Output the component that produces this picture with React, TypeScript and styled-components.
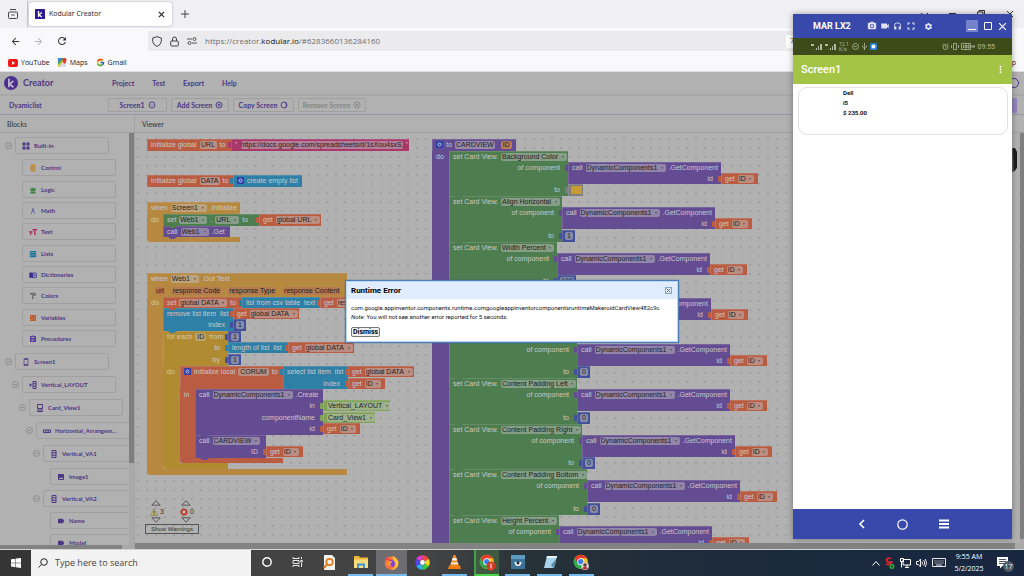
import React, { ReactNode } from 'react';
import styled, { createGlobalStyle, css } from 'styled-components';
import {
  MdArchitecture, MdAssignment, MdCasino, MdFormatPaint, MdFullscreen, MdHeadset,
  MdImage, MdLabel, MdMenuBook, MdMoreVert, MdPhotoCamera, MdSettings, MdStayCurrentPortrait,
  MdVideocam, MdArrowBack, MdArrowForward, MdRefresh,
} from 'react-icons/md';
import { FcGoogle } from 'react-icons/fc';

const ui = '"Open Sans", "Noto Sans", sans-serif';
const brand = 'Lato, "Open Sans", sans-serif';
const blockFont = '"Liberation Sans", Arial, sans-serif';
const phoneFont = 'Roboto, "Noto Sans", sans-serif';

const tone = {
  orange: '#b95c42',
  magenta: '#a93769',
  blue: '#2f80a6',
  gold: '#b7883f',
  yellow: '#b18b31',
  green: '#4e7d50',
  lime: '#7fa458',
  purple: '#644c93',
  indigo: '#45509a',
  grey: '#7d7d7d',
};

const Global = createGlobalStyle`
  * { box-sizing: border-box; }
  body { margin: 0; overflow: hidden; background: #b1b1b1; }
  button, input, select { font: inherit; color: inherit; margin: 0; padding: 0; border: 0; background: none; border-radius: 0; }
  a { color: inherit; text-decoration: none; }
  ul { list-style: none; margin: 0; padding: 0; }
  svg { display: block; flex: none; }
`;

const Desktop = styled.div`
  position: relative;
  display: flex;
  flex-direction: column;
  height: 100vh;
  overflow: hidden;
  font: 7px/10px ${ui};
`;

/* ---------- browser chrome ---------- */

const TabStrip = styled.header`
  flex: none;
  display: flex;
  align-items: center;
  height: 28px;
  padding-right: 10px;
  background: #f0f0f4;
  color: #222;
`;
const TabListButton = styled.button`
  display: grid;
  place-items: center;
  width: 28px;
  height: 28px;
  padding-right: 2px;
  border-right: 1px solid #c8c8cf;
`;
const Tab = styled.div`
  display: flex;
  align-items: center;
  gap: 4px;
  width: 143px;
  height: 24px;
  margin-left: 1px;
  padding: 0 7px 0 6px;
  border-radius: 3px;
  background: #fff;
  box-shadow: 0 0 2px #8a8a93;
  span { flex: 1; }
`;
const PlainButton = styled.button`
  display: grid;
  place-items: center;
`;
const NewTab = styled(PlainButton)`
  margin-left: 9px;
`;
const WindowControls = styled.div`
  display: flex;
  align-items: center;
  gap: 21px;
  margin-left: auto;
`;
const NavBar = styled.nav`
  flex: none;
  display: flex;
  align-items: center;
  gap: 12px;
  height: 26px;
  padding-left: 10px;
  background: #f9f9fb;
  color: #333;
`;
const AddressBar = styled.div`
  flex: 1;
  display: flex;
  align-items: center;
  gap: 8px;
  height: 20px;
  margin-left: 68px;
  padding: 0 4px;
  background: #ebebee;
  margin-right: 80px;
`;
const Address = styled.a`
  font-size: 8px;
  color: #6d6d73;
  b { font-weight: 400; color: #111; }
`;
const ZoomLevel = styled.button`
  height: 13px;
  margin-left: auto;
  margin-right: 132px;
  padding: 0 4px;
  background: #fff;
  border-radius: 2px;
  color: #222;
`;
const Bookmarks = styled.nav`
  flex: none;
  display: flex;
  align-items: center;
  gap: 8px;
  height: 18px;
  padding: 0 8px;
  background: #f9f9fb;
  border-bottom: 1px solid #dcdce0;
  color: #16161c;
  a { display: flex; align-items: center; gap: 3px; }
  a:last-child { margin-left: auto; }
`;

/* ---------- Kodular ---------- */

const Kodular = styled.main`
  flex: 1;
  min-height: 0;
  display: flex;
  flex-direction: column;
  background: #b1b1b1;
  color: #4c3783;
  font-family: ${brand};
  font-weight: 700;
`;
const TopBar = styled.div`
  flex: none;
  display: flex;
  align-items: center;
  height: 24px;
  padding: 0 5px 0 4px;
  border-bottom: 2px solid #a8a8a8;
`;
const Brand = styled.a`
  display: flex;
  align-items: center;
  gap: 5px;
  width: 108px;
  font-size: 9px;
`;
const Menu = styled.div`
  display: flex;
  gap: 18px;
`;
const Avatar = styled.div`
  margin-left: auto;
  width: 10px;
  height: 10px;
  border: 1px solid #4c3783;
  border-radius: 50%;
`;
const ScreenBar = styled.div`
  flex: none;
  display: flex;
  align-items: center;
  gap: 4px;
  height: 19px;
  padding: 0 7px 0 9px;
  border-bottom: 1px solid #9595ad;
`;
const ProjectName = styled.span`
  width: 95px;
`;
const ScreenButton = styled.button<{ $w: number }>`
  display: flex;
  align-items: center;
  justify-content: center;
  gap: 3px;
  width: ${p => p.$w}px;
  height: 14px;
  border: 1px solid #9f9f9f;
  border-radius: 1px;
  &:disabled { color: #858585; }
`;
const DesignerButton = styled.button`
  margin-left: auto;
  width: 30px;
  height: 15px;
  background: #9384bb;
`;
const Columns = styled.div`
  flex: 1;
  min-height: 0;
  display: flex;
`;
const Panel = styled.section`
  flex: none;
  display: flex;
  flex-direction: column;
  width: 135px;
  border-right: 1px solid #a3a3a3;
`;
const ViewerPanel = styled.section`
  flex: 1;
  min-width: 0;
  display: flex;
  flex-direction: column;
`;
const PanelTitle = styled.h2`
  flex: none;
  margin: 0;
  height: 18px;
  padding-left: 7px;
  border-bottom: 1px solid #a0a0a0;
  font: 400 7px/18px ${brand};
  color: #333;
`;
const TreeArea = styled.div`
  flex: 1;
  min-height: 0;
  display: flex;
`;
const Tree = styled.ul`
  flex: 1;
  min-width: 0;
  overflow: hidden;
  padding-top: 4px;
  font-size: 6px;
`;
const TreeGroup = styled.ul`
  padding: 1px 0;
  li:nth-child(3n + 2) { margin-top: 5px; }
`;
const TreeItem = styled.li<{ $depth: number; $gap?: number }>`
  display: flex;
  align-items: center;
  gap: 3px;
  height: 17px;
  margin-top: ${p => p.$gap ?? 4}px;
  padding-left: ${p => 5 + p.$depth * 7}px;
`;
const Toggle = styled.button<{ $hidden?: boolean }>`
  flex: none;
  display: grid;
  place-items: center;
  width: 7px;
  height: 7px;
  border: 1px solid #8c8c8c;
  border-radius: 50%;
  visibility: ${p => (p.$hidden ? 'hidden' : 'visible')};
  &::after { content: ''; width: 3px; height: 1px; background: #8c8c8c; }
`;
const TreeButton = styled.button`
  flex: none;
  display: flex;
  align-items: center;
  gap: 4px;
  width: 94px;
  height: 17px;
  padding-left: 6px;
  border: 1px solid #a0a0a0;
  border-radius: 2px;
  white-space: nowrap;
`;
const VerticalTrack = styled.div<{ $w: number; $thumb: number }>`
  flex: none;
  width: ${p => p.$w}px;
  background: #a9a9a9;
  &::before { content: ''; display: block; height: ${p => p.$thumb}%; background: #7f7f7f; }
`;
const HorizontalTrack = styled.div<{ $h: number; $thumb: number }>`
  flex: none;
  height: ${p => p.$h}px;
  background: #a9a9a9;
  &::before { content: ''; display: block; width: ${p => p.$thumb}%; height: 100%; background: #828282; }
`;
const CanvasArea = styled.div`
  flex: 1;
  min-height: 0;
  display: flex;
`;
const Canvas = styled.div`
  position: relative;
  isolation: isolate;
  flex: 1;
  min-width: 0;
  overflow: hidden;
  background-image: radial-gradient(circle at 3px 6px, #a0a0a0 1px, transparent 1px);
  background-size: 9px 9px;
  font: 400 7px/11px ${blockFont};
  color: #c9c9c9;
`;

/* ---------- blocks ---------- */

const Stack = styled.div<{ $x: number; $y: number }>`
  position: absolute;
  left: ${p => p.$x}px;
  top: ${p => p.$y}px;
`;
const Shape = styled.div<{ $plug?: string; $notch?: string }>`
  position: relative;
  width: max-content;
  ${p => p.$plug && css`
    &::before {
      content: '';
      position: absolute;
      left: -3px;
      top: 3px;
      width: 3px;
      height: 6px;
      background: ${p.$plug};
      border-radius: 1px 0 0 1px;
    }
  `}
  ${p => p.$notch && css`
    &::after {
      content: '';
      position: absolute;
      z-index: 1;
      left: 5px;
      bottom: -2px;
      width: 9px;
      height: 2px;
      background: ${p.$notch};
      clip-path: polygon(0 0, 100% 0, 70% 100%, 30% 100%);
    }
  `}
`;
const ShapeRow = styled.div`
  display: flex;
  align-items: flex-start;
`;
const Face = styled.div<{ $tone: string; $w: number; $h: number; $top?: boolean }>`
  flex: none;
  width: ${p => p.$w}px;
  height: ${p => p.$h}px;
  background: ${p => p.$tone};
  box-shadow: ${p => (p.$top ? 'inset 1px 1px 0 rgba(200, 200, 200, 0.2)' : 'inset 1px 0 0 rgba(200, 200, 200, 0.2)')};
`;
const Line = styled.div<{ $end?: boolean }>`
  display: flex;
  align-items: center;
  justify-content: ${p => (p.$end ? 'flex-end' : 'flex-start')};
  gap: 3px;
  height: 11px;
  padding: 0 ${p => (p.$end ? 8 : 4)}px 0 4px;
  white-space: nowrap;
`;
const Arm = styled.div<{ $tone: string; $w: number }>`
  flex: none;
  width: ${p => p.$w}px;
  padding-left: 4px;
  background: ${p => p.$tone};
`;
const ArmRow = styled.div`
  display: flex;
  align-items: stretch;
`;
const Foot = styled.div<{ $tone: string; $w: number; $h?: number }>`
  width: ${p => p.$w}px;
  height: ${p => p.$h ?? 6}px;
  background: ${p => p.$tone};
  border-radius: 0 0 0 3px;
`;
const Chip = styled.span`
  flex: none;
  display: inline-flex;
  align-items: center;
  height: 8px;
  padding: 0 2px;
  border-radius: 2px;
  background: rgba(190, 190, 190, 0.5);
  color: #1f1f1f;
  line-height: 8px;
`;
const PickWrap = styled(Chip)`
  gap: 3px;
  padding: 0 3px 0 1px;
  &::after {
    content: '';
    border: 1px solid transparent;
    border-top: 2px solid #555;
    border-bottom: 0;
  }
`;
const PickSelect = styled.select`
  appearance: none;
  height: 8px;
  line-height: 8px;
  outline: 0;
`;
const ChipInput = styled.input<{ $w: number }>`
  flex: none;
  width: ${p => p.$w}px;
  height: 8px;
  border-radius: 2px;
  background: rgba(190, 190, 190, 0.55);
  color: #1f1f1f;
  line-height: 8px;
  text-align: center;
`;
const Params = styled.div`
  display: flex;
  gap: 7px;
  padding-left: 4px;
`;
const Param = styled(Chip)`
  padding: 0 1px;
  background: #b57a52;
`;
const ParamChip = styled(Chip)`
  margin-left: 3px;
  background: #bd7a58;
`;
const Swatch = styled.button`
  width: 11px;
  height: 8px;
  background: #c79b35;
`;
const GearBox = styled.button`
  display: grid;
  place-items: center;
  width: 7px;
  height: 7px;
  border-radius: 1px;
  background: #3140a8;
`;

const Pick = ({ label, value }: { label: string; value: string }) => (
  <PickWrap>
    <PickSelect aria-label={label} defaultValue={value}>
      <option>{value}</option>
    </PickSelect>
  </PickWrap>
);
const Gear = () => (
  <GearBox aria-label="Block options">
    <svg width="5" height="5" viewBox="0 0 10 10" fill="none" stroke="#c4c8e6" strokeWidth="2">
      <circle cx="5" cy="5" r="3" />
    </svg>
  </GearBox>
);

type RowSpec = { text: ReactNode; h?: number; end?: boolean; socket?: ReactNode };
type BlockProps = { tone: string; w: number; rows: RowSpec[]; value?: boolean; notch?: boolean };

const Block = ({ tone: color, w, rows, value, notch }: BlockProps) => (
  <Shape $plug={value ? color : undefined} $notch={notch ? color : undefined}>
    {rows.map((r, i) => (
      <ShapeRow key={i}>
        <Face $tone={color} $w={w} $h={r.h ?? 12} $top={i === 0}>
          <Line $end={r.end}>{r.text}</Line>
        </Face>
        {r.socket}
      </ShapeRow>
    ))}
  </Shape>
);

const Get = ({ name, w, h = 12 }: { name: string; w: number; h?: number }) => (
  <Block value tone={tone.orange} w={w} rows={[{ h, text: <>get <Pick label="Variable" value={name} /></> }]} />
);
const ComponentRef = ({ name, w }: { name: string; w: number }) => (
  <Block value tone={tone.lime} w={w} rows={[{ h: 11, text: <Pick label="Component" value={name} /> }]} />
);
const Tight = styled.div`
  ${Line} { padding-left: 3px; padding-right: 0; }
`;
const NumberBlock = ({ value, w = 13, h = 12 }: { value: string; w?: number; h?: number }) => (
  <Tight>
    <Block value tone={tone.indigo} w={w} rows={[{ h, text: <ChipInput aria-label="Number" $w={w - 5} defaultValue={value} /> }]} />
  </Tight>
);

type Property = { name: string; w: number; value: ReactNode };
const properties: Property[] = [
  { name: 'Background Color', w: 119, value: <Tight><Block value tone={tone.grey} w={15} rows={[{ text: <Swatch aria-label="Colour" /> }]} /></Tight> },
  { name: 'Align Horizontal', w: 113, value: <NumberBlock value="1" /> },
  { name: 'Width Percent', w: 108, value: <NumberBlock value="100" w={19} /> },
  { name: 'Corner Radius', w: 109, value: <NumberBlock value="0" /> },
  { name: 'Content Padding Top', w: 128, value: <NumberBlock value="0" /> },
  { name: 'Content Padding Left', w: 128, value: <NumberBlock value="0" /> },
  { name: 'Content Padding Right', w: 133, value: <NumberBlock value="0" /> },
  { name: 'Content Padding Bottom', w: 138, value: <NumberBlock value="0" /> },
  { name: 'Height Percent', w: 110, value: <NumberBlock value="100" w={19} /> },
];

const PropertyBlock = ({ p, tall }: { p: Property; tall: boolean }) => (
  <Block
    notch
    tone={tone.green}
    w={p.w}
    rows={[
      { h: 11, text: <>set Card View. <Pick label="Property" value={p.name} /></> },
      {
        h: tall ? 23 : 22,
        end: true,
        text: 'of component',
        socket: (
          <Block
            value
            tone={tone.purple}
            w={153}
            rows={[
              { h: 11, text: <>call <Pick label="Component" value="DynamicComponents1" /> .GetComponent</> },
              { h: 11, end: true, text: 'id', socket: <Get name="ID" w={37} h={11} /> },
            ]}
          />
        ),
      },
      { h: 12, end: true, text: 'to', socket: p.value },
    ]}
  />
);

const Warnings = styled.div`
  position: absolute;
  left: 10px;
  bottom: 9px;
  width: 54px;
  color: #333;
`;
const Counters = styled.div`
  display: flex;
  gap: 16px;
  padding-left: 5px;
`;
const Counter = styled.div`
  display: flex;
  align-items: center;
  width: 14px;
  gap: 2px;
`;
const ArrowButton = styled.button`
  display: grid;
  place-items: center;
  width: 14px;
  height: 6px;
  padding-right: 2px;
`;
const WarningButton = styled.button`
  width: 54px;
  height: 10px;
  border: 1px solid #555;
  line-height: 8px;
  font-size: 6px;
`;
const Backpack = styled.div`
  position: absolute;
  right: 3px;
  top: 13px;
`;
const Arrow = ({ up }: { up?: boolean }) => (
  <ArrowButton aria-label={up ? 'Previous' : 'Next'}>
    <svg width="10" height="6" viewBox="0 0 10 6" fill="none" stroke="#444" strokeWidth=".8">
      <path d={up ? 'M.8 5.200 5 .8l4.200 4.400z' : 'M.8.8 5 5.200 9.200.8z'} />
    </svg>
  </ArrowButton>
);

const BlocksCanvas = () => (
  <Canvas>
    <Stack $x={12} $y={6}>
      <Block
        tone={tone.orange}
        w={84}
        rows={[{
          text: <>initialize global <ChipInput aria-label="Variable name" $w={17} defaultValue="URL" /> to</>,
          socket: (
            <Block value tone={tone.magenta} w={178} rows={[{
              text: <>&quot; <ChipInput aria-label="Text" $w={162} defaultValue="https://docs.google.com/spreadsheets/d/1sXou4sxS..." /> &quot;</>,
            }]} />
          ),
        }]}
      />
    </Stack>
    <Stack $x={12} $y={42}>
      <Block
        tone={tone.orange}
        w={86}
        rows={[{
          text: <>initialize global <ChipInput aria-label="Variable name" $w={20} defaultValue="DATA" /> to</>,
          socket: <Block value tone={tone.blue} w={69} rows={[{ text: <><Gear /> create empty list</> }]} />,
        }]}
      />
    </Stack>

    <Stack $x={12} $y={69}>
      <Block tone={tone.gold} w={93} rows={[{ text: <>when <Pick label="Screen" value="Screen1" /> .Initialize</> }]} />
      <ArmRow>
        <Arm $tone={tone.gold} $w={16}>do</Arm>
        <div>
          <Block notch tone={tone.green} w={96} rows={[{
            text: <>set <Pick label="Component" value="Web1" /> . <Pick label="Property" value="URL" /> to</>,
            socket: <Get name="global URL" w={62} />,
          }]} />
          <Block notch tone={tone.purple} w={67} rows={[{ h: 11, text: <>call <Pick label="Component" value="Web1" /> .Get</> }]} />
        </div>
      </ArmRow>
      <Foot $tone={tone.gold} $w={93} $h={5} />
    </Stack>

    <Stack $x={12} $y={140}>
      <Block tone={tone.gold} w={200} rows={[
        { text: <>when <Pick label="Component" value="Web1" /> .Got Text</> },
        { text: <Params><Param>url</Param><Param>response Code</Param><Param>response Type</Param><Param>response Content</Param></Params> },
      ]} />
      <ArmRow>
        <Arm $tone={tone.gold} $w={16}>do</Arm>
        <div>
          <Block notch tone={tone.orange} w={79} rows={[{
            h: 11,
            text: <>set <Pick label="Variable" value="global DATA" /> to</>,
            socket: (
              <Block value tone={tone.blue} w={78} rows={[{
                h: 11,
                text: <>list from csv table&nbsp; text</>,
                socket: <Get name="response Content" w={84} h={11} />,
              }]} />
            ),
          }]} />
          <Block notch tone={tone.blue} w={70} rows={[
            { h: 11, text: <>remove list item&nbsp; list</>, socket: <Get name="global DATA" w={66} h={11} /> },
            { end: true, text: 'index', socket: <NumberBlock value="1" /> },
          ]} />
          <Block tone={tone.yellow} w={65} rows={[
            { h: 11, text: <>for each <Chip>ID</Chip> from</>, socket: <NumberBlock value="1" h={11} /> },
            {
              end: true,
              text: 'to',
              socket: (
                <Block value tone={tone.blue} w={60} rows={[{
                  h: 11,
                  text: <>length of list&nbsp; list</>,
                  socket: <Get name="global DATA" w={66} h={11} />,
                }]} />
              ),
            },
            { end: true, text: 'by', socket: <NumberBlock value="1" h={11} /> },
          ]} />
          <ArmRow>
            <Arm $tone={tone.yellow} $w={17}>do</Arm>
            <div>
              <Block tone={tone.orange} w={103} rows={[{
                h: 23,
                text: <><Gear /> initialize local <Chip>CORUM</Chip> to</>,
                socket: (
                  <Block value tone={tone.blue} w={65} rows={[
                    { text: <>select list item&nbsp; list</>, h: 12, socket: <Get name="global DATA" w={66} h={11} /> },
                    { h: 11, end: true, text: 'index', socket: <Get name="ID" w={37} h={11} /> },
                  ]} />
                ),
              }]} />
              <ArmRow>
                <Arm $tone={tone.orange} $w={15}>in</Arm>
                <div>
                  <Block notch tone={tone.purple} w={128} rows={[
                    { h: 11, text: <>call <Pick label="Component" value="DynamicComponents1" /> .Create</> },
                    { end: true, text: 'in', socket: <ComponentRef name="Vertical_LAYOUT" w={67} /> },
                    { h: 11, end: true, text: 'componentName', socket: <ComponentRef name="Card_View1" w={52} /> },
                    { end: true, text: 'id', socket: <Get name="ID" w={37} h={11} /> },
                  ]} />
                  <Block notch tone={tone.purple} w={71} rows={[
                    { h: 11, text: <>call <Pick label="Procedure" value="CARDVIEW" /></> },
                    { end: true, text: 'ID', socket: <Get name="ID" w={37} h={11} /> },
                  ]} />
                </div>
              </ArmRow>
              <Foot $tone={tone.orange} $w={103} $h={5} />
            </div>
          </ArmRow>
          <Foot $tone={tone.yellow} $w={65} />
        </div>
      </ArmRow>
      <Foot $tone={tone.gold} $w={200} />
    </Stack>

    <Stack $x={297} $y={6}>
      <Block tone={tone.purple} w={84} rows={[{
        text: <><Gear /> to <ChipInput aria-label="Procedure name" $w={40} defaultValue="CARDVIEW" /> <ParamChip>ID</ParamChip></>,
      }]} />
      <ArmRow>
        <Arm $tone={tone.purple} $w={17}>do</Arm>
        <div>
          {properties.map((p, i) => <PropertyBlock key={p.name} p={p} tall={i % 2 === 1} />)}
        </div>
      </ArmRow>
    </Stack>

    <Backpack>
      <svg width="20" height="26" viewBox="0 0 20 26">
        <rect x="1" y="2" width="18" height="24" rx="4" fill="#555" />
        <path d="M16 2h2l2 4v16l-3 3z" fill="#1d1d1d" />
      </svg>
    </Backpack>

    <Warnings>
      <Counters>
        <Arrow up /><Arrow up />
      </Counters>
      <Counters>
        <Counter>
          <svg width="8" height="8" viewBox="0 0 8 8"><path d="M4 .5 7.600 7.500H.4z" fill="#bdb45c" stroke="#777" strokeWidth=".5" /><path d="M4 3v2.400M4 6v.8" stroke="#333" strokeWidth=".8" /></svg>3
        </Counter>
        <Counter>
          <svg width="8" height="8" viewBox="0 0 8 8"><circle cx="4" cy="4" r="3.600" fill="#b5432f" /><path d="m2.500 2.500 3 3m0-3-3 3" stroke="#d5d5d5" /></svg>0
        </Counter>
      </Counters>
      <Counters>
        <Arrow /><Arrow />
      </Counters>
      <WarningButton>Show Warnings</WarningButton>
    </Warnings>
  </Canvas>
);

/* ---------- tree ---------- */

const PathIcon = ({ children }: { children: ReactNode }) => (
  <svg width="8" height="8" viewBox="0 0 8 8" fill="none" stroke="#4c3783" strokeWidth="1">{children}</svg>
);
const FillIcon = ({ color, d }: { color: string; d: string }) => (
  <svg width="8" height="8" viewBox="0 0 8 8" fill={color}><path d={d} /></svg>
);
const RowsIcon = <PathIcon><path d="M2 .5h4v7H2zM2 2.800h4M2 5.200h4" /></PathIcon>;

const drawers: [string, ReactNode][] = [
  ['Control', <FillIcon color="#bf8834" d="M2.500.5h3l1 1v1.200h-5V1.500zM1 3.200h6v1.600H1zM1.500 5.300h5v1.200l-1 1h-3l-1-1z" />],
  ['Logic', <FillIcon color="#3c8046" d="M1 1.500 2.500 3 3 1l1 2 1-2 .5 2L7 1.500 6.300 5H1.700zM1.800 5.600h4.400L6.800 7.500H1.200z" />],
  ['Math', <MdArchitecture size={8} color="#3d4a96" />],
  ['Text', <FillIcon color="#a3265b" d="M3.500 1H8v1.300H6.500V7H5.200V2.300H3.500zM0 3.200h3.600v1.200H2.400V7H1.200V4.400H0z" />],
  ['Lists', <FillIcon color="#20749f" d="M.8 1h6.400v1.200H.8zM.8 2.700h6.400v2H.8zM.8 5.200h6.400v2H.8z" />],
  ['Dictionaries', <MdMenuBook size={8} color="#3c2f8c" />],
  ['Colors', <MdFormatPaint size={8} color="#6c6c6c" />],
  ['Variables', <MdCasino size={8} color="#bd5a30" />],
  ['Procedures', <MdAssignment size={8} color="#56389a" />],
];
type TreeNode = { name: string; depth: number; gap: number; icon: ReactNode; leaf?: boolean };
const nodes: TreeNode[] = [
  { name: 'Screen1', depth: 0, gap: 5, icon: <MdStayCurrentPortrait size={8} /> },
  { name: 'Vertical_LAYOUT', depth: 1, gap: 6, icon: <PathIcon><path d="M4 .5h3v7H4zM4 2.800h3M4 5.200h3M0 4h3M1.500 2.500v3" /></PathIcon> },
  { name: 'Card_View1', depth: 2, gap: 6, icon: <PathIcon><path d="M1.500.5h5v4h-5zM1 6h6M1 7.500h6" /></PathIcon> },
  { name: 'Horizontal_Arrangem...', depth: 3, gap: 6, icon: <PathIcon><path d="M.5 3h7v2.500h-7zM2.800 3v2.500M5.200 3v2.500" /></PathIcon> },
  { name: 'Vertical_VA1', depth: 4, gap: 6, icon: RowsIcon },
  { name: 'Image1', depth: 5, gap: 6, icon: <MdImage size={8} />, leaf: true },
  { name: 'Vertical_VA2', depth: 4, gap: 5, icon: RowsIcon },
  { name: 'Name', depth: 5, gap: 5, icon: <MdLabel size={8} />, leaf: true },
  { name: 'Model', depth: 5, gap: 5, icon: <MdLabel size={8} />, leaf: true },
];

const BlocksTree = () => (
  <Tree>
    <TreeItem $depth={0} $gap={0}>
      <Toggle aria-label="Collapse" />
      <TreeButton><FillIcon color="#4c3783" d="M.5.5h3v3h-3zM4.500.5h3v3h-3zM.5 4.500h3v3h-3zM4.500 4.500h3v3h-3z" />Built-in</TreeButton>
    </TreeItem>
    <li>
      <TreeGroup>
        {drawers.map(([name, icon]) => (
          <TreeItem key={name} $depth={1}>
            <Toggle $hidden aria-hidden tabIndex={-1} />
            <TreeButton>{icon}{name}</TreeButton>
          </TreeItem>
        ))}
      </TreeGroup>
    </li>
    {nodes.map(n => (
      <TreeItem key={n.name} $depth={n.depth} $gap={n.gap}>
        <Toggle $hidden={n.leaf} aria-label="Collapse" />
        <TreeButton>{n.icon}{n.name}</TreeButton>
      </TreeItem>
    ))}
  </Tree>
);

/* ---------- dialog ---------- */

const Dialog = styled.section`
  position: absolute;
  top: 280px;
  left: 0;
  right: 0;
  width: 334px;
  margin: 0 auto;
  padding: 1px;
  border: 1px solid #4f7fb4;
  background: #b9d6f7;
  box-shadow: 0 0 1px #2d5b8d;
  color: #111;
  font: 400 6px/9px ${phoneFont};
`;
const DialogTitle = styled.div`
  display: flex;
  align-items: center;
  justify-content: space-between;
  height: 17px;
  padding: 0 5px 0 4px;
  background: #e0edfe;
  h1 { margin: 0; font: 700 8px/17px ${phoneFont}; color: #000; }
`;
const CloseBox = styled.button`
  display: grid;
  place-items: center;
  width: 7px;
  height: 7px;
  border: 1px solid #86a5cc;
  background: #f2f8ff;
`;
const DialogBody = styled.div`
  padding: 4px;
  background: #fff;
  p { margin: 0; white-space: nowrap; }
`;
const Dismiss = styled.button`
  display: block;
  height: 10px;
  margin-top: 6px;
  padding: 0 1px;
  border: 1px solid #777;
  border-radius: 2px;
  background: #f0f0f0;
  font: 700 7px/8px ${phoneFont};
  color: #000;
`;

/* ---------- phone mirror ---------- */

const Phone = styled.aside`
  position: absolute;
  top: 14px;
  right: 12px;
  bottom: 37px;
  width: 219px;
  display: flex;
  flex-direction: column;
  background: #fff;
  box-shadow: 0 0 6px rgba(0, 0, 0, 0.35);
  color: #fff;
  font: 400 7px/10px ${phoneFont};
`;
const MirrorBar = styled.div`
  flex: none;
  display: flex;
  align-items: center;
  height: 24px;
  padding: 0 5px 0 20px;
  background: #3949ab;
`;
const MirrorTitle = styled.strong`
  width: 54px;
  font-size: 9px;
`;
const IconGroup = styled.div<{ $gap: number; $push?: boolean }>`
  display: flex;
  align-items: center;
  gap: ${p => p.$gap}px;
  ${p => p.$push && 'margin-left: auto;'}
`;
const MirrorTools = styled(IconGroup)`
  color: #dfe2f4;
`;
const Settings = styled(PlainButton)`
  margin-left: 7px;
  color: #dfe2f4;
`;
const KeyboardToggle = styled(PlainButton)`
  width: 12px;
  height: 12px;
  background: #7481cb;
`;
const StatusBar = styled.div`
  flex: none;
  display: flex;
  align-items: center;
  justify-content: space-between;
  height: 17px;
  padding: 0 17px 0 18px;
  background: #3d4b1b;
  color: #b4bb9e;
`;
const Rate = styled.span`
  font-size: 5px;
  line-height: 5px;
`;
const AppBar = styled.div`
  flex: none;
  display: flex;
  align-items: center;
  justify-content: space-between;
  height: 29px;
  padding: 0 6px 0 8px;
  background: #a4c445;
  h2 { margin: 0; font: 500 11px/14px ${phoneFont}; }
`;
const Screen = styled.div`
  flex: 1;
  padding: 3px 4px 0 5px;
  background: #fff;
`;
const Card = styled.div`
  height: 48px;
  padding-left: 44px;
  border: 1px solid #e2e2e2;
  border-radius: 9px;
  color: #111;
  font: 700 6px/10px ${phoneFont};
  p { margin: 0; }
`;
const PhoneNav = styled.div`
  flex: none;
  display: flex;
  align-items: center;
  justify-content: center;
  gap: 31px;
  height: 30px;
  background: #3949ab;
`;

/* ---------- taskbar ---------- */

const Taskbar = styled.footer`
  flex: none;
  display: flex;
  align-items: stretch;
  height: 27px;
  border-top: 1px solid #d4d4d4;
  background: linear-gradient(90deg, #434343 0%, #434343 42%, #263238 52%, #1d2b3c 70%, #182640 100%);
  color: #fff;
`;
const Start = styled.button`
  display: grid;
  place-items: center;
  width: 31px;
  background: #353535;
`;
const Search = styled.label`
  display: flex;
  align-items: center;
  gap: 7px;
  width: 220px;
  padding-left: 7px;
  background: #f2f2f2;
  color: #333;
  input { flex: 1; font-size: 9px; outline: 0; }
  input::placeholder { color: #444; opacity: 1; }
`;
const Task = styled.button<{ $state?: 'open' | 'active' | 'alert' }>`
  flex: none;
  display: grid;
  place-items: center;
  width: 31px;
  border-bottom: 2px solid transparent;
  ${p => p.$state === 'open' && css`
    width: 25px;
    margin: 0 3px 0 4px;
    border-bottom-color: #76b9ed;
  `}
  ${p => p.$state === 'active' && css`
    border-bottom-color: #76b9ed;
    background: #6d6d71;
  `}
  ${p => p.$state === 'alert' && css`
    width: 25px;
    margin: 0 2px 0 4px;
    border-bottom-color: #4dd24a;
    border-left: 2px solid #43a04a;
    background: #3e5b41;
  `}
`;
const Tray = styled.div`
  display: flex;
  align-items: center;
  gap: 5px;
  margin-left: auto;
  padding-right: 9px;
`;
const Clock = styled.time`
  width: 36px;
  text-align: center;
  line-height: 12px;
`;
const Notice = styled.button`
  position: relative;
  width: 18px;
  height: 18px;
  margin-left: 5px;
`;
const NoticeCount = styled.span`
  position: absolute;
  right: 1px;
  bottom: 0;
  width: 11px;
  height: 11px;
  border-radius: 50%;
  background: #4d5663;
  font-size: 7px;
  line-height: 11px;
  text-align: center;
`;

const Logo = ({ size, round }: { size: number; round?: boolean }) => (
  <svg width={size} height={size} viewBox="0 0 20 20">
    {round ? <circle cx="10" cy="10" r="10" fill="#4b2f8d" /> : <rect width="20" height="20" rx="1" fill="#2e1a96" />}
    <path d="M7 4v12M13.500 7 8 11.500l5.500 4.500" fill="none" stroke={round ? '#b9b4c8' : '#fff'} strokeWidth="2.600" />
  </svg>
);

const Chrome = ({ badge }: { badge: ReactNode }) => (
  <svg width="17" height="17" viewBox="0 0 24 24">
    <circle cx="11" cy="11" r="10" fill="#fbc116" />
    <path d="M11 11 2.300 6A10 10 0 0 0 11 21l4-7z" fill="#2da94f" />
    <path d="M11 6h8.700A10 10 0 0 0 2.300 6L7 13z" fill="#e33b2e" />
    <circle cx="11" cy="11" r="5" fill="#fff" />
    <circle cx="11" cy="11" r="3.800" fill="#3e7de8" />
    {badge}
  </svg>
);

const Cross = ({ size, color, w = 1 }: { size: number; color: string; w?: number }) => (
  <svg width={size} height={size} viewBox="0 0 8 8" fill="none" stroke={color} strokeWidth={w}>
    <path d="m1 1 6 6m0-6-6 6" />
  </svg>
);
const RingIcon = ({ d }: { d: string }) => (
  <svg width="8" height="8" viewBox="0 0 8 8" fill="none" stroke="currentColor" strokeWidth=".9">
    <circle cx="4" cy="4" r="3" /><path d={d} />
  </svg>
);
const Signal = () => (
  <svg width="11" height="8" viewBox="0 0 11 8" fill="#b4bb9e"><path d="M0 1h3v2H0zM3 7l1-1v1zM5 5h1v2H5zM7 3h1v4H7zM9 1h2v6H9z" /></svg>
);

export default function App() {
  return (
    <Desktop>
      <Global />
      <TabStrip>
        <TabListButton aria-label="Firefox View">
          <svg width="10" height="10" viewBox="0 0 10 10" fill="none" stroke="#444"><path d="M2 .5h6M1.500 3h7q1 0 1 1v4.500q0 1-1 1h-7q-1 0-1-1V4q0-1 1-1zM3.500 6h3" /></svg>
        </TabListButton>
        <Tab>
          <Logo size={10} />
          <span>Kodular Creator</span>
          <PlainButton aria-label="Close tab"><Cross size={7} color="#222" w={1.3} /></PlainButton>
        </Tab>
        <NewTab aria-label="New tab">
          <svg width="8" height="8" viewBox="0 0 8 8" stroke="#444"><path d="M4 0v8M0 4h8" /></svg>
        </NewTab>
        <WindowControls>
          <svg width="7" height="5" viewBox="0 0 7 5" fill="none" stroke="#333"><path d="m0 1 3.500 3L7 1" /></svg>
          <svg width="7" height="2" viewBox="0 0 7 2"><path d="M0 0h7v2H0z" fill="#333" /></svg>
          <svg width="8" height="8" viewBox="0 0 8 8" fill="none" stroke="#333"><path d="M2 2V.5h5.500V6H6M.5 2H6v5.500H.5z" /></svg>
          <Cross size={8} color="#333" />
        </WindowControls>
      </TabStrip>
      <NavBar>
        <PlainButton aria-label="Back"><MdArrowBack size={11} /></PlainButton>
        <PlainButton aria-label="Forward"><MdArrowForward size={11} color="#b3b3b8" /></PlainButton>
        <PlainButton aria-label="Reload"><MdRefresh size={12} /></PlainButton>
        <AddressBar>
          <svg width="10" height="11" viewBox="0 0 10 11" fill="none" stroke="#444"><path d="M5 .7 9.300 2v3.500Q8.800 9 5 10.400 1.200 9 .7 5.500V2z" /></svg>
          <svg width="9" height="11" viewBox="0 0 9 11" fill="none" stroke="#444"><path d="M1.500 5h6q.8 0 .8.8v3.400q0 .8-.8.8h-6q-.8 0-.8-.8V5.800q0-.8.8-.8zM2.500 5V3a2 2 0 0 1 4 0v2" /></svg>
          <svg width="10" height="8" viewBox="0 0 10 8" fill="none" stroke="#555"><path d="M0 2h5M5 6h5" /><circle cx="7.500" cy="2" r="1.500" /><circle cx="2.500" cy="6" r="1.500" /></svg>
          <Address href="#project">https://creator.<b>kodular.io</b>/#6283660136284160</Address>
          <ZoomLevel>70%</ZoomLevel>
        </AddressBar>
      </NavBar>
      <Bookmarks>
        <a href="#youtube"><svg width="10" height="8" viewBox="0 0 10 8"><rect width="10" height="8" rx="2" fill="#f01616" /><path d="M4 2.200v3.600L7 4z" fill="#fff" /></svg>YouTube</a>
        <a href="#maps">
          <svg width="9" height="9" viewBox="0 0 9 9"><rect width="8" height="9" fill="#46a35a" /><path d="M0 9 7 2l1 1v6z" fill="#d9dde2" /><path d="M0 0h4L0 4z" fill="#3f7de0" /><path d="M0 7 6 1l1 1-7 7z" fill="#f4c534" /><path d="M6.500 6C5 4 4.500 3 4.500 2a2 2 0 0 1 4 0c0 1-.5 2-2 4z" fill="#e23a2f" /></svg>Maps
        </a>
        <a href="#gmail"><FcGoogle size={9} />Gmail</a>
        <a href="#help">Help</a>
      </Bookmarks>

      <Kodular>
        <TopBar>
          <Brand href="#home"><Logo size={14} round />Creator</Brand>
          <Menu><a href="#p">Project</a><a href="#t">Test</a><a href="#e">Export</a><a href="#h">Help</a></Menu>
          <Avatar />
        </TopBar>
        <ScreenBar>
          <ProjectName>Dyamiclist</ProjectName>
          <ScreenButton $w={59}>Screen1 <RingIcon d="m3 3.700 1 1 1-1" /></ScreenButton>
          <ScreenButton $w={58}>Add Screen <RingIcon d="M4 2.300v3.400M2.300 4h3.400" /></ScreenButton>
          <ScreenButton $w={61}>Copy Screen <RingIcon d="M5.500 1.500q2 2.500 0 5" /></ScreenButton>
          <ScreenButton $w={68} disabled>Remove Screen <RingIcon d="m2.800 2.800 2.400 2.400m0-2.400-2.400 2.400" /></ScreenButton>
          <DesignerButton aria-label="Designer" />
        </ScreenBar>
        <Columns>
          <Panel>
            <PanelTitle>Blocks</PanelTitle>
            <TreeArea>
              <BlocksTree />
              <VerticalTrack $w={5} $thumb={80} />
            </TreeArea>
            <HorizontalTrack $h={4} $thumb={91} />
          </Panel>
          <ViewerPanel>
            <PanelTitle>Viewer</PanelTitle>
            <CanvasArea>
              <BlocksCanvas />
              <VerticalTrack $w={4} $thumb={99} />
            </CanvasArea>
            <HorizontalTrack $h={6} $thumb={99} />
          </ViewerPanel>
        </Columns>
      </Kodular>

      <Dialog role="alertdialog" aria-label="Runtime Error">
        <DialogTitle>
          <h1>Runtime Error</h1>
          <CloseBox aria-label="Close"><Cross size={5} color="#33527a" w={1.3} /></CloseBox>
        </DialogTitle>
        <DialogBody>
          <p>com.google.appinventor.components.runtime.comgoogleappinventorcomponentsruntimeMakeroidCardView482c9c</p>
          <p><i>Note:</i> You will not see another error reported for 5 seconds.</p>
          <Dismiss>Dismiss</Dismiss>
        </DialogBody>
      </Dialog>

      <Phone>
        <MirrorBar>
          <MirrorTitle>MAR LX2</MirrorTitle>
          <MirrorTools $gap={3}>
            <PlainButton aria-label="Screenshot"><MdPhotoCamera size={10} /></PlainButton>
            <PlainButton aria-label="Record"><MdVideocam size={10} /></PlainButton>
            <PlainButton aria-label="Audio"><MdHeadset size={9} /></PlainButton>
            <PlainButton aria-label="Full screen"><MdFullscreen size={12} /></PlainButton>
          </MirrorTools>
          <Settings aria-label="Settings"><MdSettings size={9} /></Settings>
          <IconGroup $gap={6} $push>
            <KeyboardToggle aria-label="Minimise"><svg width="8" height="8" viewBox="0 0 8 8"><path d="M0 7.500h8" stroke="#fff" /></svg></KeyboardToggle>
            <PlainButton aria-label="Maximise"><svg width="8" height="8" viewBox="0 0 8 8" fill="none" stroke="#fff"><path d="M.5.5h7v7h-7z" /></svg></PlainButton>
            <PlainButton aria-label="Close"><Cross size={9} color="#fff" /></PlainButton>
          </IconGroup>
        </MirrorBar>
        <StatusBar>
          <IconGroup $gap={3}>
            <Signal />
            <Signal />
            <Rate>12.1<br />K/s</Rate>
            <svg width="7" height="7" viewBox="0 0 7 7" fill="none" stroke="#b4bb9e" strokeWidth=".8"><circle cx="3.500" cy="3.500" r="3" /><path d="M2 3.500h3" /></svg>
            <svg width="5" height="7" viewBox="0 0 5 7" fill="none" stroke="#b4bb9e" strokeWidth=".8"><path d="M2.500 0v7M.5 2.500v1.500l2 1.500 2-1.500V2.500" /></svg>
            <svg width="7" height="7" viewBox="0 0 7 7"><rect width="7" height="7" rx="1" fill="#2c7fd0" /><circle cx="3.500" cy="3.500" r="2" fill="#fff" /></svg>
          </IconGroup>
          <IconGroup $gap={2}>
            <svg width="7" height="7" viewBox="0 0 7 7" fill="none" stroke="#b4bb9e" strokeWidth=".8"><circle cx="3.500" cy="4" r="2.500" /><path d="M3.500 2.500V4h1M.5 1.500l1-1M6.500 1.500l-1-1" /></svg>
            <svg width="8" height="7" viewBox="0 0 8 7" fill="none" stroke="#b4bb9e" strokeWidth=".8"><path d="M2.500.5h3v6h-3zM.5 2v3M7.500 2v3" /></svg>
            <svg width="15" height="7" viewBox="0 0 15 7" fill="none" stroke="#b4bb9e" strokeWidth=".8"><path d="M.5.5h9v6h-9zM2.500 2v3M4 2h1.500v3H4zM7 2v3h1V2zM11 2v3M13 2v3M12 3.500h2" /></svg>
            <span>09:55</span>
          </IconGroup>
        </StatusBar>
        <AppBar>
          <h2>Screen1</h2>
          <PlainButton aria-label="More"><MdMoreVert size={11} /></PlainButton>
        </AppBar>
        <Screen>
          <Card><p>Dell</p><p>i5</p><p>$ 235.00</p></Card>
        </Screen>
        <PhoneNav>
          <PlainButton aria-label="Back"><svg width="10" height="10" viewBox="0 0 10 10" fill="none" stroke="#fff" strokeWidth="1.600"><path d="M8 1 4 5l4 4" /></svg></PlainButton>
          <PlainButton aria-label="Home"><svg width="11" height="11" viewBox="0 0 11 11" fill="none" stroke="#fff" strokeWidth="1.200"><circle cx="5.500" cy="5.500" r="4.700" /></svg></PlainButton>
          <PlainButton aria-label="Recents"><svg width="10" height="10" viewBox="0 0 10 10" stroke="#fff" strokeWidth="1.800"><path d="M0 1.500h10M0 5h10M0 8.500h10" /></svg></PlainButton>
        </PhoneNav>
      </Phone>

      <Taskbar>
        <Start aria-label="Start"><svg width="10" height="10" viewBox="0 0 10 10" fill="#fff"><path d="M0 1.300 4.500.7v4H0zM5 .6 10 0v4.700H5zM0 5.200h4.500v4L0 8.600zM5 5.200h5V10l-5-.7z" /></svg></Start>
        <Search>
          <svg width="10" height="10" viewBox="0 0 10 10" fill="none" stroke="#222" strokeWidth="1"><circle cx="6" cy="4" r="3.300" /><path d="M3.600 6.400.5 9.500" /></svg>
          <input type="text" aria-label="Search" placeholder="Type here to search" />
        </Search>
        <Task aria-label="Cortana"><svg width="10" height="10" viewBox="0 0 10 10" fill="none" stroke="#fff" strokeWidth="1.400"><circle cx="5" cy="5" r="4.200" /></svg></Task>
        <Task aria-label="Task view"><svg width="11" height="10" viewBox="0 0 11 10" fill="none" stroke="#e8e8e8"><path d="M1 0v1.500h6V0M1 3.500h6v3H1zM1 10V8.500h6V10M9.500 0v2M9.500 6v4M8.800 3.500h1.500v1.500H8.800z" /></svg></Task>
        <Task aria-label="File search"><svg width="12" height="15" viewBox="0 0 12 15"><path d="M1 0h8l3 3v12H1z" fill="#f1f1f1" /><circle cx="6.500" cy="7" r="3.200" fill="none" stroke="#e57a22" strokeWidth="1.800" /><path d="M4 9.500.8 13" stroke="#e57a22" strokeWidth="2" /></svg></Task>
        <Task $state="open" aria-label="File Explorer"><svg width="14" height="12" viewBox="0 0 14 12"><path d="M0 0h5l1 1.500h8V12H0z" fill="#f0b93b" /><path d="M0 3.500h14V12H0z" fill="#fbdc7d" /><path d="M3 12V7.500h8V12H9V9.500H5V12z" fill="#3c93de" /></svg></Task>
        <Task $state="active" aria-label="Firefox">
          <svg width="15" height="15" viewBox="0 0 15 15"><circle cx="7.500" cy="8" r="6.800" fill="#ff7139" /><path d="M9 1c2 1 5.500 3.500 5.500 7.500A7 7 0 0 1 7 15C11 13 12.500 10 11 7 9.500 5.500 8 4 9 1z" fill="#ffc53a" /><path d="M1 4.500 2 2l2 2.500L5.500 3.500 7 5.500z" fill="#ff3b4d" /><circle cx="7.300" cy="8.600" r="3.500" fill="#7542e5" /><path d="M3.500 6.500q3-1 5 .5L6.500 8.500q-1 2 2 2.500-4 1.500-5-1.500z" fill="#ff9a2a" /></svg>
        </Task>
        <Task aria-label="Colour wheel">
          <svg width="15" height="15" viewBox="0 0 15 15" fill="none" strokeWidth="4.500"><path d="M7.500 2.500a5 5 0 0 1 4.300 2.500" stroke="#f44" /><path d="M11.800 5a5 5 0 0 1 0 5" stroke="#f8d521" /><path d="M11.800 10a5 5 0 0 1-4.300 2.500" stroke="#37cf3f" /><path d="M7.500 12.500A5 5 0 0 1 3.200 10" stroke="#2cb6f1" /><path d="M3.200 10a5 5 0 0 1 0-5" stroke="#5145e8" /><path d="M3.200 5a5 5 0 0 1 4.300-2.500" stroke="#e23bd2" /><circle cx="7.500" cy="7.500" r="2.400" fill="#fff" stroke="none" /></svg>
        </Task>
        <Task $state="open" aria-label="VLC"><svg width="13" height="14" viewBox="0 0 13 14"><path d="M5.500 0h2L11 11H2z" fill="#f58a1f" /><path d="M4.600 3h3.800l.8 2.500H3.800zM3.200 7.500h6.600l.5 1.700H2.700z" fill="#f4f4f4" /><path d="M1 10.500h11l1 3.500H0z" fill="#ef7d12" /></svg></Task>
        <Task $state="alert" aria-label="Chrome"><Chrome badge={<><circle cx="17" cy="17" r="6.500" fill="#d13a24" /><path d="M17 13.500v7" stroke="#fff" strokeWidth="1.500" /></>} /></Task>
        <Task $state="open" aria-label="Mirror app"><svg width="14" height="14" viewBox="0 0 14 14"><rect width="14" height="14" fill="#3d7299" /><rect width="14" height="4" fill="#5d9ac2" /><path d="M3.500 7h7q-.3 4-3.500 4T3.500 7z" fill="#fff" /><circle cx="7" cy="8" r="1.500" fill="#12222e" /></svg></Task>
        <Task $state="open" aria-label="Notepad"><svg width="14" height="14" viewBox="0 0 14 14"><path d="M4 1h10l-3 12H1z" fill="#a9d3ea" /><path d="M4 1h10l-.5 2h-10z" fill="#e9f4fa" /><path d="m8 10 5-6-1 7-2 2z" fill="#5a8bab" /></svg></Task>
        <Task $state="open" aria-label="Chrome profile"><Chrome badge={<><circle cx="17" cy="17" r="5.500" fill="#d9cfc8" /><circle cx="17" cy="15.500" r="2.500" fill="#5a3b30" /><path d="M13 20q4-4 8 0-4 4-8 0z" fill="#b02f3a" /></>} /></Task>
        <Tray>
          <svg width="8" height="5" viewBox="0 0 8 5" fill="none" stroke="#fff"><path d="m.5 4.500 3.500-4 3.500 4" /></svg>
          <svg width="10" height="12" viewBox="0 0 10 12" fill="none" strokeWidth="1.600"><path d="M6 1.500Q1.500.5 1.500 3t4 2-2 2.500L1 7" stroke="#e8262d" /><circle cx="7" cy="9.500" r="1.700" stroke="#2fa83c" /></svg>
          <svg width="11" height="10" viewBox="0 0 11 10" fill="none" stroke="#fff"><path d="M3 1.500h7.500v5.500H3zM5 9.500h4M7 7v2M.5.5h3v3h-3zM1.500 4v5.500" /></svg>
          <svg width="11" height="10" viewBox="0 0 11 10" fill="none" stroke="#fff" strokeWidth=".9"><path d="M.5 3.500h2l2-2.500v8l-2-2.500h-2zM6 3.500q1 1.500 0 3M7.700 2.200q2 2.800 0 5.600M9.300 1q2.500 4 0 8" /></svg>
          <svg width="14" height="10" viewBox="0 0 14 10" fill="none" stroke="#e8e8e8"><path d="M.5.5h13v8H.5z" /><path d="M2.500 3h9M2.500 5h9" strokeDasharray="1 1" /><path d="M4 7h6" /></svg>
          <Clock>9:55 AM<br />5/2/2025</Clock>
          <Notice aria-label="Notifications">
            <svg width="11" height="12" viewBox="0 0 11 12"><path d="M0 0h11v9H5.500L3 11.500V9H0z" fill="#fff" /><path d="M2 2.500h7M2 4.500h7M2 6.500h7" stroke="#1b2940" strokeWidth=".8" /></svg>
            <NoticeCount>17</NoticeCount>
          </Notice>
        </Tray>
      </Taskbar>
    </Desktop>
  );
}
